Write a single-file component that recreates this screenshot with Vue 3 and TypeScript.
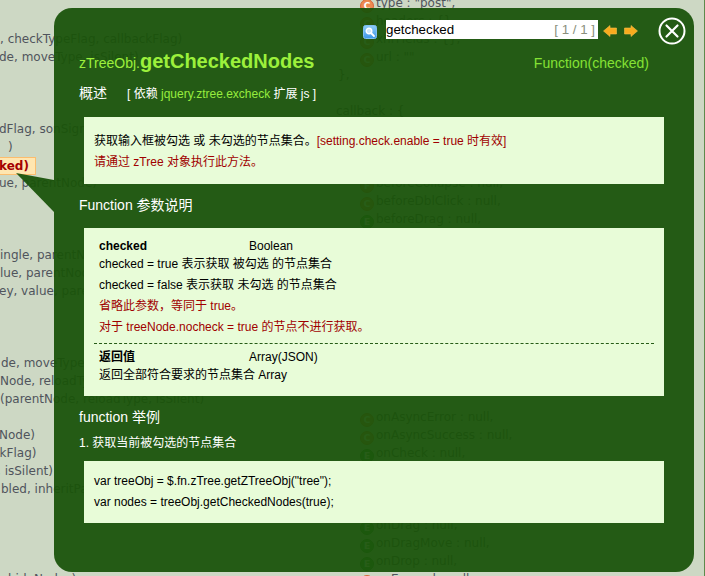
<script setup lang="ts">
interface LeftLine { text: string; x: number }
interface RightLine { text: string; icon?: 'c' | 'e'; letter?: string; x?: number }

const leftLines: LeftLine[] = [
  { text: ', checkTypeFlag, callbackFlag)', x: 0 },
  { text: 'de, moveType, isSilent)', x: -1 },
  { text: '', x: 0 }, { text: '', x: 0 }, { text: '', x: 0 },
  { text: 'dFlag, sonSign', x: -1 },
  { text: ')', x: 8 },
  { text: '#', x: -1 },
  { text: 'ue, parentNode)', x: -1 },
  { text: '', x: 0 }, { text: '', x: 0 }, { text: '', x: 0 },
  { text: 'ingle, parentNode', x: 0 },
  { text: 'lue, parentNode', x: 0 },
  { text: 'ey, value, parentNode', x: -1 },
  { text: '', x: 0 }, { text: '', x: 0 }, { text: '', x: 0 },
  { text: 'de, moveType, isSilent)', x: 1 },
  { text: 'Node, reloadType, isSilent)', x: 0 },
  { text: '(parentNode, reloadType, isSilent)', x: 0 },
  { text: '', x: 0 },
  { text: 'Node)', x: -1 },
  { text: 'ckFlag)', x: -7 },
  { text: ', isSilent)', x: -3 },
  { text: 'bled, inheritParent)', x: 1 },
  { text: '', x: 0 }, { text: '', x: 0 }, { text: '', x: 0 }, { text: '', x: 0 },
  { text: 'hideNodes)', x: 8 }
]

const blanks = (n: number): RightLine[] => Array.from({ length: n }, () => ({ text: '' }))

const rightLines: RightLine[] = [
  { text: 'type : "post",', icon: 'c', letter: 'C' },
  { text: 'headers : {},', icon: 'c', letter: 'C' },
  { text: 'xhrFields : {},', icon: 'c', letter: 'C' },
  { text: 'url : ""', icon: 'c', letter: 'C' },
  { text: '},', x: 0 },
  ...blanks(1),
  { text: 'callback : {', x: -2 },
  ...blanks(3),
  { text: 'beforeCollapse : null,', icon: 'c', letter: 'F' },
  { text: 'beforeDblClick : null,', icon: 'c', letter: 'C' },
  { text: 'beforeDrag : null,', icon: 'e', letter: 'E' },
  ...blanks(10),
  { text: 'onAsyncError : null,', icon: 'c', letter: 'C' },
  { text: 'onAsyncSuccess : null,', icon: 'c', letter: 'C' },
  { text: 'onCheck : null,', icon: 'e', letter: 'E' },
  ...blanks(3),
  { text: 'onDrag : null,', icon: 'e', letter: 'E' },
  { text: 'onDragMove : null,', icon: 'e', letter: 'E' },
  { text: 'onDrop : null,', icon: 'e', letter: 'E' },
  { text: 'onExpand : null,', icon: 'c', letter: 'C' }
]
</script>

<template>
  <div class="page">
    <div class="code">
      <div class="col-left">
        <div v-for="(l, i) in leftLines" :key="i" class="line" :style="{ marginLeft: l.x + 'px' }">
          <span v-if="l.text === '#'" class="hit">ked)</span>
          <template v-else>{{ l.text }}</template>
        </div>
      </div>
      <div class="col-right">
        <div v-for="(l, i) in rightLines" :key="i" class="line" :class="{ member: l.icon }" :style="l.x ? { marginLeft: l.x + 'px' } : undefined">
          <span v-if="l.icon" class="dot" :class="l.icon">{{ l.letter }}</span>{{ l.text }}
        </div>
      </div>
    </div>

    <svg class="pointer" viewBox="0 0 40 42" width="40" height="42" aria-hidden="true">
      <polygon points="0,1 38,8 38,40" />
    </svg>

    <section class="modal">
      <div class="tools">
        <svg class="search-ico" viewBox="0 0 14 14" width="14" height="14" aria-hidden="true">
          <defs>
            <linearGradient id="sb" x1="0" y1="0" x2="0" y2="1">
              <stop offset="0" stop-color="#8fcdf7" />
              <stop offset="1" stop-color="#3d97e6" />
            </linearGradient>
          </defs>
          <rect x="0.5" y="0.5" width="13" height="13" rx="2" fill="url(#sb)" stroke="#7fbff0" />
          <circle cx="6" cy="6" r="2.8" fill="#cfe9fb" stroke="#fff" stroke-width="1.4" />
          <path d="M8 8l3 3" stroke="#fff" stroke-width="1.8" stroke-linecap="round" />
        </svg>
        <div class="search-box">
          <span class="query">getchecked</span>
          <span class="count">[ 1 / 1 ]</span>
        </div>
        <svg class="arrow" viewBox="0 0 14 12" width="14" height="12" aria-hidden="true">
          <path d="M7 0.5L0.5 6 7 11.5V9H13.5V3H7Z" fill="#f8ab1e" stroke="#f5c04a" stroke-width="0.6" stroke-linejoin="round" />
        </svg>
        <svg class="arrow" viewBox="0 0 14 12" width="14" height="12" aria-hidden="true">
          <path d="M7 0.5L13.5 6 7 11.5V9H0.5V3H7Z" fill="#f8ab1e" stroke="#f5c04a" stroke-width="0.6" stroke-linejoin="round" />
        </svg>
        <svg class="close" viewBox="0 0 28 28" width="28" height="28" aria-hidden="true">
          <circle cx="14" cy="14" r="12.5" fill="none" stroke="#fff" stroke-width="2" />
          <path d="M8.5 8.5l11 11M19.5 8.5l-11 11" stroke="#fff" stroke-width="2.2" stroke-linecap="round" />
        </svg>
      </div>

      <header class="title">
        <h1><span class="owner">zTreeObj.</span><span class="method">getCheckedNodes</span></h1>
        <span class="signature">Function(checked)</span>
      </header>

      <h2 class="heading overview">概述<span class="dep">[ 依赖 <em>jquery.ztree.excheck</em> 扩展 js ]</span></h2>
      <div class="box box-desc">
        <p>获取输入框被勾选 或 未勾选的节点集合。<span class="red">[setting.check.enable = true 时有效]</span></p>
        <p class="red">请通过 zTree 对象执行此方法。</p>
      </div>

      <h2 class="heading">Function 参数说明</h2>
      <div class="box box-params">
        <div class="param first"><b>checked</b><span>Boolean</span></div>
        <p>checked = true 表示获取 被勾选 的节点集合</p>
        <p>checked = false 表示获取 未勾选 的节点集合</p>
        <p class="red">省略此参数，等同于 true。</p>
        <p class="red">对于 treeNode.nocheck = true 的节点不进行获取。</p>
        <hr class="rule" />
        <div class="param"><b>返回值</b><span>Array(JSON)</span></div>
        <div class="param-note">返回全部符合要求的节点集合 Array</div>
      </div>

      <h2 class="heading">function 举例</h2>
      <h3 class="sub">1. 获取当前被勾选的节点集合</h3>
      <div class="box box-code">
        <p>var treeObj = $.fn.zTree.getZTreeObj("tree");</p>
        <p>var nodes = treeObj.getCheckedNodes(true);</p>
      </div>
    </section>
  </div>
</template>

<style>
html, body { margin: 0; overflow: hidden; }
</style>

<style scoped>
.page {
  position: relative;
  width: 705px;
  height: 576px;
  overflow: hidden;
  box-sizing: border-box;
  background: #cdd8c4;
  border-right: 1px solid #5d8a4c;
  font-family: "Liberation Sans", "Noto Sans CJK SC", sans-serif;
}
.code {
  display: flex;
  font: 12px/18px "DejaVu Sans", sans-serif;
  color: #50545c;
  white-space: pre;
}
.col-left { width: 338px; flex: none; padding-top: 30px; overflow: hidden; }
.col-right { margin-top: -6px; }
.line { height: 18px; }
.member { padding-left: 22px; }
.dot {
  display: inline-block;
  width: 12px;
  height: 12px;
  margin-right: 2px;
  border: 1px solid;
  border-radius: 50%;
  font: bold 9px/12px "DejaVu Sans", sans-serif;
  text-align: center;
  vertical-align: -2px;
  color: #fff;
}
.dot.c { background: #ee8a50; border-color: #d9683a; }
.dot.e { background: #4aa84a; border-color: #2f9030; }
.hit {
  display: inline-block;
  box-sizing: border-box;
  height: 18px;
  margin-top: 1px;
  padding-right: 6px;
  border: 1px solid #fbbd6e;
  border-left: 0;
  background: #ffe6b0;
  color: #a40000;
  font-weight: bold;
  line-height: 16px;
}
.pointer {
  position: absolute;
  left: 16px;
  top: 172px;
  fill: rgba(25, 83, 10, 0.94);
}
.modal {
  position: absolute;
  left: 54px;
  top: 8px;
  width: 640px;
  height: 564px;
  box-sizing: border-box;
  padding: 10px 30px 0;
  border-radius: 18px;
  background: rgba(25, 83, 10, 0.94);
  color: #fff;
  font-size: 12px;
}
.tools {
  display: flex;
  align-items: center;
  height: 26px;
  margin: 0 -22px 0 279px;
}
.search-ico { flex: none; margin: 0 9px 0 0; position: relative; top: 1px; }
.search-box {
  flex: none;
  display: flex;
  justify-content: space-between;
  align-items: center;
  box-sizing: border-box;
  width: 212px;
  height: 19px;
  margin-top: -3px;
  padding: 0 3px 0 0;
  background: #fff;
  font-size: 13.33px;
  color: #000;
}
.count { color: #8a8f7c; }
.arrow { flex: none; margin: 0 0 0 5px; }
.arrow + .arrow { margin-left: 7px; }
.close { flex: none; margin-left: 20px; }

.title {
  display: flex;
  justify-content: space-between;
  align-items: baseline;
  height: 30px;
  margin: 2px 15px 0 -6px;
  padding-left: 1px;
  color: #9cf03c;
}
h1 { margin: 0; font-weight: normal; font-size: 14px; line-height: 30px; }
.method { font-size: 20px; font-weight: bold; }
.signature { font-size: 14px; color: #84e234; }

.heading {
  margin: 0 0 0 -5px;
  font-size: 14px;
  font-weight: normal;
  line-height: 21px;
}
.overview { margin-top: 7px; }
.dep { margin-left: 20px; font-size: 12px; }
.dep em { font-style: normal; color: #97ec3e; }

.box { background: #e8fcd8; color: #000; }
p { margin: 0; line-height: 21px; }
.red { color: #a00000; }

.box-desc { height: 67px; box-sizing: border-box; margin-top: 12px; padding: 14px 10px 0; }
.box-desc + .heading { margin-top: 11px; }

.box-params { height: 168px; box-sizing: border-box; margin-top: 12px; padding: 9px 10px 0; }
.box-params p, .param, .param-note { padding-left: 5px; }
.box-params + .heading { margin-top: 11px; }
.param { display: flex; line-height: 18px; }
.param.first { margin-bottom: -1px; }
.param b { width: 150px; }
.param-note { line-height: 18px; }
.rule {
  height: 0;
  margin: 5px 0 4px;
  border: 0;
  border-top: 1px dashed #265c17;
}

.sub {
  margin: 5px 0 0 -5px;
  font-size: 12px;
  font-weight: normal;
  line-height: 21px;
}
.box-code { height: 62px; box-sizing: border-box; margin-top: 7px; padding: 10px 10px 0; }
</style>
